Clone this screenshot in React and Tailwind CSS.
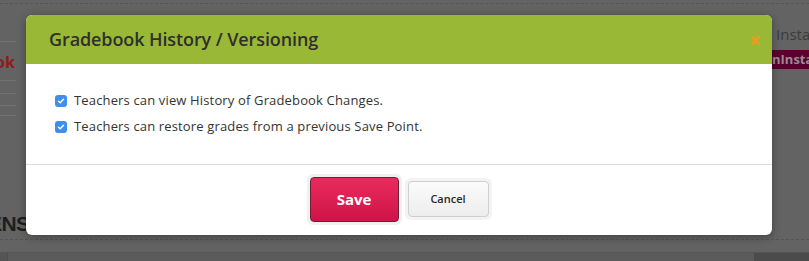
import React from "react";

function Check() {
  return (
    <span className="w-[12px] h-[12px] rounded-[3px] bg-[#3d8ef0] flex items-center justify-center shrink-0">
      <svg width="8" height="8" viewBox="0 0 8 8">
        <path d="M1.5 4.2 L3.2 5.8 L6.5 2.2" stroke="#fff" strokeWidth="1.5" fill="none" strokeLinecap="round" strokeLinejoin="round" />
      </svg>
    </span>
  );
}

export default function App() {
  return (
    <div className="relative w-[809px] h-[261px] overflow-hidden bg-[#636363]" style={{ fontFamily: '"Open Sans", "Liberation Sans", sans-serif' }}>
      {/* background page (dimmed) */}
      <div className="flex flex-col h-full">
        <div className="h-[4px] border-b border-dashed border-[#555]" />
        <div className="flex flex-1">
          <div className="w-[16px] flex flex-col pt-[37px]">
            <div className="h-px bg-[#727272]" />
            <div className="text-[16px] font-bold text-[#8a1d1d] leading-none mt-[12px] -ml-[5px] whitespace-nowrap">ok</div>
            <div className="h-px bg-[#727272] mt-[10px]" />
            <div className="h-px bg-[#727272] mt-[12px]" />
            <div className="h-px bg-[#727272] mt-[11px]" />
            <div className="h-px bg-[#727272] mt-[9px]" />
            <div className="text-[21px] font-extrabold text-[#1e1e1e] leading-none mt-[97px] -ml-[12px] tracking-tight whitespace-nowrap" style={{ fontFamily: '"Liberation Sans", sans-serif' }}>ENS</div>
          </div>
          <div className="flex-1" />
          <div className="w-[37px] flex flex-col pt-[23px]">
            <div className="text-[15px] text-[#3c3c3c] leading-none pl-[4px] whitespace-nowrap">Instal</div>
            <div className="mt-[8px] h-[19px] bg-[#5a0030] text-[13px] font-bold text-[#9a8a90] leading-[19px] whitespace-nowrap overflow-hidden">nInstal</div>
          </div>
        </div>
        <div className="h-[13px] border-t border-dashed border-[#545454]" />
        <div className="h-[9px] flex bg-[#5b5b5b] border-t border-[#555]">
          <div className="w-[8px] bg-[#555] border-r border-[#4e4e4e]" />
          <div className="flex-1" />
          <div className="w-[55px] bg-[#4b4b4b]" />
        </div>
      </div>

      {/* modal */}
      <div className="absolute left-[26px] top-[15px] w-[746px] h-[220px] rounded-[6px] overflow-hidden bg-white shadow-[0_2px_8px_rgba(0,0,0,0.35)] flex flex-col">
        <div className="h-[49px] bg-[#99b835] flex items-center justify-between pl-[23px] pr-[12px]">
          <span className="text-[18px] font-semibold text-[#2f2f2f] tracking-[-0.1px]" style={{ fontFamily: '"Open Sans", sans-serif' }}>Gradebook History / Versioning</span>
          <svg width="9" height="9" viewBox="0 0 9 9" className="mt-[2px]">
            <path d="M1.2 1.2 L7.8 7.8 M7.8 1.2 L1.2 7.8" stroke="#f39a1c" strokeWidth="2.4" strokeLinecap="round" />
          </svg>
        </div>
        <div className="flex flex-col pl-[29px] pt-[24px] pb-[24px] border-b border-[#dcdcdc]">
          <label className="flex items-center gap-[7px] h-[26px] text-[13px] tracking-[0.15px] text-[#333]">
            <Check />
            <span>Teachers can view History of Gradebook Changes.</span>
          </label>
          <label className="flex items-center gap-[7px] h-[26px] text-[13px] tracking-[0.15px] text-[#333]">
            <Check />
            <span>Teachers can restore grades from a previous Save Point.</span>
          </label>
        </div>
        <div className="flex-1 flex items-center justify-center gap-[3px] pb-[2px]">
          <div className="p-[3px] rounded-[6px] bg-[#f0f0f0]">
            <button className="w-[89px] h-[45px] rounded-[4px] border border-[#6e1f33] bg-gradient-to-b from-[#ea2a5e] to-[#cf1247] text-white text-[15px] font-bold">Save</button>
          </div>
          <div className="p-[3px] rounded-[6px] bg-[#f3f3f3]">
            <button className="w-[81px] h-[36px] rounded-[4px] border border-[#cfcfcf] bg-gradient-to-b from-[#fbfbfb] to-[#ededed] text-[#2a2a2a] text-[11px] font-semibold">Cancel</button>
          </div>
        </div>
      </div>
    </div>
  );
}
